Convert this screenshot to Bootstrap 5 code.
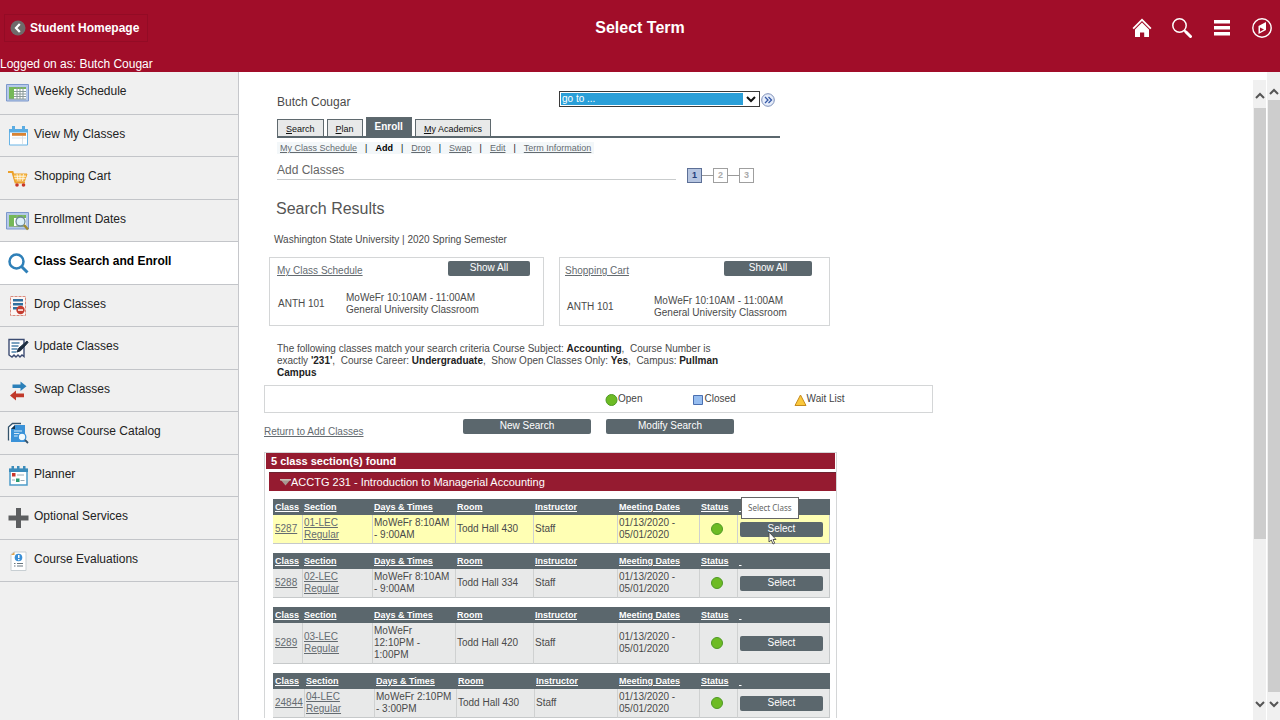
<!DOCTYPE html>
<html lang="en">
<head>
<meta charset="utf-8">
<meta name="viewport" content="width=device-width, initial-scale=1">
<title>Select Term</title>
<link href="https://cdn.jsdelivr.net/npm/bootstrap@5.3.0/dist/css/bootstrap.min.css" rel="stylesheet">
<style>
  body { font-family: "Liberation Sans", Arial, sans-serif; font-size: 10px; line-height: 12px; color: #4a4a4a; background: #fff; }
  a { color: #646b70; }
  svg { display: block; flex: none; }

  /* banner */
  .banner { background: #a10d29; color: #fff; }
  .banner-row { height: 56px; }
  .side-slot { flex: 1 1 0; }
  .back-btn { color: #fff; font-size: 12px; line-height: 16px; font-weight: 700; border: 1px solid #930b25; border-radius: 0; padding: 5px 8px 5px 5px; }
  .back-btn:hover { color: #fff; }
  .page-title { font-size: 16px; line-height: 20px; font-weight: 700; }
  .tools { gap: 20px; }
  .tool-btn { width: 20px; background: none; border: 0; padding: 0; color: #fff; display: flex; justify-content: center; }
  .logged { font-size: 12px; line-height: 16px; }

  /* left menu */
  .side-menu { width: 239px; flex: none; background: #f0f0f0; border-right: 1px solid #c6c7cb; }
  .side-menu .nav-link { height: 43px; padding: 0 6px; gap: 5px; font-size: 12px; line-height: 16px; color: #222; border-bottom: 1px solid #c3c5c9; }
  .side-menu .nav-link:nth-child(even) { height: 42px; }
  .side-menu .nav-link span { padding-bottom: 4px; }
  .side-menu .nav-link.active { background: #fff; color: #000; font-weight: 700; }

  /* page head */
  .work { padding: 19px 0 0 25px; }
  .indent { padding-left: 13px; }
  .head-w { width: 498px; }
  .person { font-size: 12px; line-height: 16px; padding-top: 3px; }
  .goto { width: 201px; }
  .goto select { display: block; width: 100%; height: 16px; appearance: none; border: 1px solid #3a3a3a; border-radius: 0; color: #fff; font-size: 10px; line-height: 12px; padding: 0 2px; outline: 0;
    background: linear-gradient(#2a9fd8, #2a9fd8) 1px 1px / 182px 12px no-repeat #fff; }
  .goto svg { right: 4px; top: 4px; pointer-events: none; }
  .go-btn { border: 0; padding: 0; background: none; margin: 2px 0 0 1px; }
  .tabs { width: 503px; border-bottom: 2px solid #5b676d; margin-top: 7px; gap: 3px; }
  .tabs .nav-link { padding: 3px 8px 1px; font-size: 9px; line-height: 12px; color: #111; background: #e8e9e9; border: 1px solid #5f696e; border-bottom: 0; border-radius: 0; }
  .tabs .nav-link.active { background: #5b676d; color: #fff; font-weight: 700; font-size: 10px; padding: 3px 8px 3px; }
  .subnav { background: #f3f7f9; width: 317px; font-size: 9px; line-height: 12px; gap: 8px; padding: 0 3px; margin-top: 4px; color: #111; white-space: nowrap; }
  .subnav b { color: #000; }
  .add-title { width: 399px; font-size: 12px; line-height: 16px; color: #666; border-bottom: 1px solid #c9cccd; padding-bottom: 1px; }
  .steps { padding: 6px 0 0 11px; }
  .step { width: 15px; height: 15px; border: 1px solid #9f9f9f; font-size: 9px; line-height: 13px; font-weight: 700; color: #aaa; text-align: center; }
  .step.on { border-color: #5c6f96; background: #b6c5e0; color: #24407c; }
  .step-line { width: 11px; height: 1px; background: #9a9a9a; }
  .results-title { font-size: 16px; line-height: 20px; color: #555; margin: 16px 0 0 12px; font-weight: 400; }
  .school { margin: 15px 0 0 10px; }

  /* schedule and cart panels */
  .panels { margin: 11px 0 0 5px; gap: 15px; }
  .panel { border: 1px solid #d4d6d7; height: 69px; }
  .panel-a { width: 275px; padding: 3px 13px 0 7px; }
  .panel-b { width: 271px; padding: 3px 17px 0 5px; }
  .pill { border: 0; border-radius: 2px; background: #5b676d; color: #fff; font-size: 10px; line-height: 12px; padding: 1px 0 2px; text-align: center; }
  .w-show { width: 82px; } .w-show2 { width: 88px; } .w-main { width: 128px; } .w-pick { width: 83px; }
  .meet-a { margin-top: 15px; }
  .meet-b { margin-top: 18px; }
  .course { width: 69px; padding-left: 1px; }
  .course2 { width: 89px; padding-left: 2px; }
  .criteria { width: 450px; margin: 17px 0 0; }
  .criteria b { color: #222; }

  .legend-box { width: 669px; border: 1px solid #d4d6d7; height: 28px; margin-top: 6px; padding-left: 340px; gap: 50px; color: #444; }
  .legend-box span { display: flex; align-items: center; }
  .actions { margin-top: 6px; gap: 15px; }
  .back-link { width: 184px; padding-top: 7px; }

  /* class list */
  .found { width: 573px; margin-top: 14px; border: 1px solid #d4d6d7; border-bottom: 0; padding-left: 1px; }
  .found-bar { background: #951b30; color: #fff; font-size: 11px; line-height: 16px; font-weight: 700; padding-left: 5px; margin: 0 1px 0 0; }
  .group-bar { background: #951b30; color: #fff; font-size: 11px; line-height: 18px; border-top: 1px solid #6d2330; margin: 3px 0 0 3px; padding-left: 11px; }
  .sections { width: 557px; table-layout: fixed; margin: 8px 0 0 7px; border-collapse: separate; border-spacing: 0; }
  .sections + .sections { margin-top: 9px; }
  .sections th { background: #5b676d; font-size: 9px; line-height: 12px; padding: 2px 0 2px 2px; height: 16px; }
  .sections th a { color: #fff; }
  .sections td { background: #e8e9e9; padding: 2px 0 2px 1px; vertical-align: middle; border-left: 1px solid #cfd1d1; border-bottom: 1px solid #c6c9ca; }
  .sections td:first-child { border-left: 0; padding-left: 2px; }
  .sections td:last-child { border-right: 1px solid #c6c9ca; padding-left: 2px; }
  .sections .hot td { background: #ffffb4; }
  .k1 { width: 29px; } .k2 { width: 70px; } .k3 { width: 83px; } .k4 { width: 78px; }
  .k5 { width: 84px; } .k6 { width: 82px; } .k7 { width: 38px; } .k8 { width: 93px; }
  .wide .k1 { width: 31px; } .wide .k3 { width: 82px; } .wide .k5 { width: 83px; }
  .dot { width: 12px; height: 12px; border-radius: 50%; background: #6dbb24; border: 1px solid #4f9a25; display: block; margin-left: 10px; }
  .tip { left: 1px; bottom: 18px; background: #fff; border: 1px solid #666; color: #666; font: 8px/12px "Noto Sans", sans-serif; padding: 4px 6px; white-space: nowrap; }
  .pointer { left: 28px; top: 9px; }

  /* scroll rails */
  .rails { gap: 1px; }
  .rail { width: 13px; background: #f0f0f0; color: #555; padding: 12px 0; }
  .thumb { background: #cdcdcd; width: 12px; }
</style>
</head>
<body class="vh-100 overflow-hidden d-flex flex-column">
<header class="banner">
  <div class="banner-row d-flex align-items-center">
    <div class="side-slot px-1">
      <button class="btn back-btn d-inline-flex align-items-center gap-1" type="button">
        <svg width="16" height="16" viewBox="0 0 16 16"><circle cx="8" cy="8" r="7.5" fill="#6f6a6a"/><path d="M9.8 4 6 8l3.800 4" fill="none" stroke="#fff" stroke-width="2.200"/></svg>
        Student Homepage
      </button>
    </div>
    <h1 class="page-title m-0">Select Term</h1>
    <div class="side-slot tools d-flex justify-content-end align-items-center pe-2">
      <button class="tool-btn" type="button" aria-label="Home"><svg width="20" height="20" viewBox="0 0 20 20" fill="#fff"><path d="M10 .5 19.500 10l-1.300 1.200L10 3 1.800 11.200.5 10z"/><path d="M10 4.500 17 11.500V19h-4.800v-4.500H8V19H3v-7.500z"/></svg></button>
      <button class="tool-btn" type="button" aria-label="Search"><svg width="20" height="20" viewBox="0 0 20 20" fill="none" stroke="#fff"><circle cx="7.500" cy="7.500" r="6.700" stroke-width="1.500"/><path d="m12 12 1.500 1.500" stroke-width="2"/><path d="m14 14 4.500 4.500" stroke-width="3" stroke-linecap="round"/></svg></button>
      <button class="tool-btn" type="button" aria-label="Actions"><svg width="18" height="16" viewBox="0 0 18 16" fill="#fff"><path d="M1 0h16v3.500H1zM1 6h16v3.500H1zM1 12h16v3.500H1z"/></svg></button>
      <button class="tool-btn" type="button" aria-label="Navigator"><svg width="20" height="20" viewBox="0 0 20 20" fill="none" stroke="#fff"><circle cx="10" cy="10" r="9.200" stroke-width="1.400"/><path d="M14 4v8l-7.500 4V8z" fill="#fff" stroke="none"/><path d="M8 9.500v4.300l4-2.200z" fill="#a10d29" stroke="none"/></svg></button>
    </div>
  </div>
  <div class="logged">Logged on as: Butch Cougar</div>
</header>

<div class="d-flex flex-grow-1 overflow-hidden">
  <nav class="side-menu nav flex-column flex-nowrap" aria-label="Enrollment">
    <a class="nav-link d-flex align-items-center" href="#"><svg width="23" height="20" viewBox="0 0 23 20"><path d="M.5 1.500h22v16.500H.5z" fill="#b5c9e9" stroke="#7d98cc"/><path d="M3 4h17v12H3z" fill="#fff"/><path d="M3 4h5v12H3zM8 4h12v2H8z" fill="#75b858"/><path d="M8 8.500h12M8 11h12M8 13.500h12M11 4v12M14 4v12M17 4v12M3 16h17" stroke="#8a9a9a" fill="none"/></svg><span>Weekly Schedule</span></a>
    <a class="nav-link d-flex align-items-center" href="#"><svg width="23" height="22" viewBox="0 0 23 22"><path d="M3.500 4.500h18v15.500h-18z" fill="#fff" stroke="#69b4e6"/><path d="M3 4h19v3.500H3zM6 1h3v4H6zM16 1h3v4h-3z" fill="#5aace2"/><path d="M6 8h14v2.800H6z" fill="#d98332"/><path d="M6 13h14M16.500 11v8" stroke="#dbe3e8"/></svg><span>View My Classes</span></a>
    <a class="nav-link d-flex align-items-center" href="#"><svg width="23" height="22" viewBox="0 0 23 22"><path d="M2 5h4.500l3 10.500H19" fill="none" stroke="#eca02a" stroke-width="2"/><path d="M7 7h14l-2.500 7H9z" fill="#f9c45a" stroke="#eca02a"/><path d="M8 9.300h12M8.500 11.600h11M11 7l1 7M14 7v7M17.500 7l-1 7" stroke="#fff" stroke-width=".7" fill="none"/><circle cx="11" cy="18" r="1.800" fill="#c8372a"/><circle cx="17.500" cy="18" r="1.800" fill="#c8372a"/></svg><span>Shopping Cart</span></a>
    <a class="nav-link d-flex align-items-center" href="#"><svg width="23" height="20" viewBox="0 0 23 20"><path d="M.5 1.500h22v16.500H.5z" fill="#b5c9e9" stroke="#7d98cc"/><path d="M3 4h17v12H3z" fill="#fff"/><path d="M3 4h5v12H3zM8 4h12v3H8z" fill="#75b858"/><path d="M11 4v12M3 15.500h17M17 4v12" stroke="#8fae8a" fill="none"/><circle cx="14.500" cy="10.500" r="4.500" fill="#dceff9" stroke="#6d8996" stroke-width="1.300"/><path d="m18 14 4 4.500" stroke="#a08a31" stroke-width="2.500"/></svg><span>Enrollment Dates</span></a>
    <a class="nav-link active d-flex align-items-center" href="#" aria-current="page"><svg width="23" height="22" viewBox="0 0 23 22" fill="none" stroke="#2f80b8" stroke-width="2.500"><circle cx="10.500" cy="9.500" r="7"/><path d="m15.500 14.500 6 6" stroke-width="3"/></svg><span>Class Search and Enroll</span></a>
    <a class="nav-link d-flex align-items-center" href="#"><svg width="23" height="22" viewBox="0 0 23 22"><path d="M4.500 1.500h15v19h-15z" fill="#fbf6f5" stroke="#d98a7c" stroke-dasharray="3 1"/><path d="M7 4h10v2.500H7zM7 8h10v2.500H7zM7 12h6v2.500H7z" fill="#2f6f9f"/><circle cx="14.500" cy="15" r="4.200" fill="#c43c2f"/><path d="M12 14.300h5v1.500h-5z" fill="#fff"/></svg><span>Drop Classes</span></a>
    <a class="nav-link d-flex align-items-center" href="#"><svg width="23" height="22" viewBox="0 0 23 22"><path d="M3 2.500h15v17l-2-1.500-2 2-2-2-2 2-2-2-2 2-3-2z" fill="#fff" stroke="#3c4c72" stroke-width="1.400"/><path d="M5.500 6h8M5.500 9h7M5.500 12h6M5.500 15h5" stroke="#4e83ab" stroke-width="1.300"/><path d="m21 4-8.500 7.500L11 15l3.500-1.200L22 5.500z" fill="#1c2d40" stroke="#1c2d40"/></svg><span>Update Classes</span></a>
    <a class="nav-link d-flex align-items-center" href="#"><svg width="23" height="22" viewBox="0 0 23 22"><path d="M6.500 4.500h8V1.500l6 4.700-6 4.700V8h-8z" fill="#2b80b9"/><path d="M18 13.500h-8v-3l-6 5 6 5v-3.300h8z" fill="#c1392b"/></svg><span>Swap Classes</span></a>
    <a class="nav-link d-flex align-items-center" href="#"><svg width="23" height="22" viewBox="0 0 23 22"><path d="M2.500 18.500V5l4-3.500H15" fill="#fff" stroke="#34536b" stroke-width="1.300"/><path d="M9 3h10v17H5V7z" fill="#3a92d8"/><path d="M9 3v4H5z" fill="#17324a"/><path d="M8 9h8M8 11.500h6M8 14h4" stroke="#d4ebfa"/><circle cx="16" cy="15" r="3.800" fill="#f2f9fd" stroke="#3a92d8" stroke-width="1.300"/><path d="m19 18 3 3" stroke="#34536b" stroke-width="1.800"/></svg><span>Browse Course Catalog</span></a>
    <a class="nav-link d-flex align-items-center" href="#"><svg width="23" height="22" viewBox="0 0 23 22"><path d="M4 4.500h17V20H4z" fill="#fff" stroke="#4d9cc9" stroke-width="1.500"/><path d="M3 3.500h19V7H3zM5.500 1h2.500v4H5.500zM11 1h2.500v4H11zM17 1h2.500v4H17z" fill="#3b8cbb"/><path d="M6 8h3.500v3.500H6z" fill="#c9362c"/><path d="M10 13.500h3.500V17H10z" fill="#2b9a70"/><path d="M11 10h7M6 15h3M14.500 15.500h4" stroke="#9aabb5"/></svg><span>Planner</span></a>
    <a class="nav-link d-flex align-items-center" href="#"><svg width="23" height="22" viewBox="0 0 23 22" fill="#5c5e60"><path d="M10 1h5v7.500h7.500v5H15V21h-5v-7.500H2.500v-5H10z"/></svg><span>Optional Services</span></a>
    <a class="nav-link d-flex align-items-center" href="#"><svg width="23" height="22" viewBox="0 0 23 22"><path d="M5 4.500 8 2h12v18.500H5z" fill="#fff" stroke="#c8cfd3"/><path d="M5 5 8.500 2v3z" fill="#e0a34d"/><circle cx="12.500" cy="7.500" r="3.800" fill="#3a8fd6"/><path d="M12 5h1.500v3H12zM12 9h1.500v1.200H12z" fill="#fff"/><path d="M8 13.500h1.500M8 16h1.500M11 13.500h6M11 16h6" stroke="#687780" stroke-width="1.200"/></svg><span>Course Evaluations</span></a>
  </nav>

  <main class="work flex-grow-1 overflow-hidden">
    <div class="indent">
      <div class="head-w d-flex align-items-start justify-content-between">
        <div class="person">Butch Cougar</div>
        <div class="d-flex align-items-start">
          <div class="goto position-relative">
            <select aria-label="Go to"><option>go to ...</option></select>
            <svg class="position-absolute" width="10" height="8" viewBox="0 0 10 8"><path d="m1 2 4 4 4-4" fill="none" stroke="#111" stroke-width="2"/></svg>
          </div>
          <button class="go-btn" type="button" aria-label="Go"><svg width="14" height="14" viewBox="0 0 14 14" fill="none"><circle cx="7" cy="7" r="6.300" fill="#e6edfa" stroke="#7d8fb8"/><path d="m4 4 3 3-3 3M7.500 4l3 3-3 3" stroke="#3558a6" stroke-width="1.300"/></svg></button>
        </div>
      </div>
      <nav class="tabs nav flex-nowrap align-items-end" aria-label="Sections">
        <a class="nav-link" href="#"><u>S</u>earch</a>
        <a class="nav-link" href="#"><u>P</u>lan</a>
        <a class="nav-link active" href="#" aria-current="page">Enroll</a>
        <a class="nav-link" href="#"><u>M</u>y Academics</a>
      </nav>
      <div class="subnav d-flex">
        <a href="#">My Class Schedule</a><span>|</span><b>Add</b><span>|</span><a href="#">Drop</a><span>|</span><a href="#">Swap</a><span>|</span><a href="#">Edit</a><span>|</span><a href="#">Term Information</a>
      </div>
      <div class="d-flex align-items-start mt-2">
        <div class="add-title">Add Classes</div>
        <div class="steps d-flex align-items-center">
          <div class="step on">1</div><div class="step-line"></div><div class="step">2</div><div class="step-line"></div><div class="step">3</div>
        </div>
      </div>
    </div>

    <h2 class="results-title">Search Results</h2>
    <div class="school">Washington State University | 2020 Spring Semester</div>

    <div class="panels d-flex">
      <section class="panel panel-a">
        <div class="d-flex justify-content-between align-items-start">
          <a class="pt-1" href="#">My Class Schedule</a>
          <button class="pill w-show" type="button">Show All</button>
        </div>
        <div class="meet-a d-flex align-items-center">
          <div class="course">ANTH 101</div>
          <div>MoWeFr 10:10AM - 11:00AM<br>General University Classroom</div>
        </div>
      </section>
      <section class="panel panel-b">
        <div class="d-flex justify-content-between align-items-start">
          <a class="pt-1" href="#">Shopping Cart</a>
          <button class="pill w-show2" type="button">Show All</button>
        </div>
        <div class="meet-b d-flex align-items-center">
          <div class="course2">ANTH 101</div>
          <div>MoWeFr 10:10AM - 11:00AM<br>General University Classroom</div>
        </div>
      </section>
    </div>

    <div class="indent">
      <p class="criteria">The following classes match your search criteria Course Subject: <b>Accounting</b>,&nbsp; Course Number is<br>exactly <b>'231'</b>,&nbsp; Course Career: <b>Undergraduate</b>,&nbsp; Show Open Classes Only: <b>Yes</b>,&nbsp; Campus: <b>Pullman<br>Campus</b></p>
    </div>

    <div class="legend-box d-flex align-items-center">
      <span><svg width="13" height="13" viewBox="0 0 13 13"><circle cx="6.500" cy="7" r="5.500" fill="#6dbb24" stroke="#4f9a25"/></svg>Open</span>
      <span><svg width="12" height="12" viewBox="0 0 12 12"><path d="M1.500 2.500h9v9h-9z" fill="#96bdf0" stroke="#4a6fb0"/></svg>Closed</span>
      <span class="ms-2"><svg width="13" height="13" viewBox="0 0 13 13"><path d="M6.500 2 12 12.500H1z" fill="#fac83c" stroke="#c58a1c"/></svg>Wait List</span>
    </div>

    <div class="actions d-flex align-items-start">
      <div class="back-link"><a href="#">Return to Add Classes</a></div>
      <button class="pill w-main" type="button">New Search</button>
      <button class="pill w-main" type="button">Modify Search</button>
    </div>

    <section class="found">
      <div class="found-bar">5 class section(s) found</div>
      <div class="group-bar d-flex align-items-center"><svg width="11" height="8" viewBox="0 0 11 8"><path d="M0 1h11L5.500 7.500z" fill="#a79a92"/><path d="M0 1h11v1.500H0z" fill="#cbbfb7"/></svg>ACCTG 231 - Introduction to Managerial Accounting</div>

      <table class="sections">
        <colgroup><col class="k1"><col class="k2"><col class="k3"><col class="k4"><col class="k5"><col class="k6"><col class="k7"><col class="k8"></colgroup>
        <thead><tr><th><a href="#">Class</a></th><th><a href="#">Section</a></th><th><a href="#">Days &amp; Times</a></th><th><a href="#">Room</a></th><th><a href="#">Instructor</a></th><th><a href="#">Meeting Dates</a></th><th><a href="#">Status</a></th><th><a href="#">&nbsp;</a></th></tr></thead>
        <tbody><tr class="hot"><td><a href="#">5287</a></td><td><a href="#">01-LEC<br>Regular</a></td><td>MoWeFr 8:10AM - 9:00AM</td><td>Todd Hall 430</td><td>Staff</td><td>01/13/2020 -<br>05/01/2020</td><td><i class="dot"></i></td>
          <td><div class="position-relative"><button class="pill w-pick d-block" type="button">Select</button>
            <div class="tip position-absolute" role="tooltip">Select Class</div>
            <svg class="pointer position-absolute" width="9" height="14" viewBox="0 0 9 14"><path d="M1 1v10l2.300-2 1.700 4 1.700-.8L5 8.500h3z" fill="#fff" stroke="#444" stroke-width=".9"/></svg></div></td></tr></tbody>
      </table>

      <table class="sections">
        <colgroup><col class="k1"><col class="k2"><col class="k3"><col class="k4"><col class="k5"><col class="k6"><col class="k7"><col class="k8"></colgroup>
        <thead><tr><th><a href="#">Class</a></th><th><a href="#">Section</a></th><th><a href="#">Days &amp; Times</a></th><th><a href="#">Room</a></th><th><a href="#">Instructor</a></th><th><a href="#">Meeting Dates</a></th><th><a href="#">Status</a></th><th><a href="#">&nbsp;</a></th></tr></thead>
        <tbody><tr><td><a href="#">5288</a></td><td><a href="#">02-LEC<br>Regular</a></td><td>MoWeFr 8:10AM - 9:00AM</td><td>Todd Hall 334</td><td>Staff</td><td>01/13/2020 -<br>05/01/2020</td><td><i class="dot"></i></td><td><button class="pill w-pick d-block" type="button">Select</button></td></tr></tbody>
      </table>

      <table class="sections">
        <colgroup><col class="k1"><col class="k2"><col class="k3"><col class="k4"><col class="k5"><col class="k6"><col class="k7"><col class="k8"></colgroup>
        <thead><tr><th><a href="#">Class</a></th><th><a href="#">Section</a></th><th><a href="#">Days &amp; Times</a></th><th><a href="#">Room</a></th><th><a href="#">Instructor</a></th><th><a href="#">Meeting Dates</a></th><th><a href="#">Status</a></th><th><a href="#">&nbsp;</a></th></tr></thead>
        <tbody><tr><td><a href="#">5289</a></td><td><a href="#">03-LEC<br>Regular</a></td><td>MoWeFr<br>12:10PM -<br>1:00PM</td><td>Todd Hall 420</td><td>Staff</td><td>01/13/2020 -<br>05/01/2020</td><td><i class="dot"></i></td><td><button class="pill w-pick d-block" type="button">Select</button></td></tr></tbody>
      </table>

      <table class="sections wide">
        <colgroup><col class="k1"><col class="k2"><col class="k3"><col class="k4"><col class="k5"><col class="k6"><col class="k7"><col class="k8"></colgroup>
        <thead><tr><th><a href="#">Class</a></th><th><a href="#">Section</a></th><th><a href="#">Days &amp; Times</a></th><th><a href="#">Room</a></th><th><a href="#">Instructor</a></th><th><a href="#">Meeting Dates</a></th><th><a href="#">Status</a></th><th><a href="#">&nbsp;</a></th></tr></thead>
        <tbody><tr><td><a href="#">24844</a></td><td><a href="#">04-LEC<br>Regular</a></td><td>MoWeFr 2:10PM - 3:00PM</td><td>Todd Hall 430</td><td>Staff</td><td>01/13/2020 -<br>05/01/2020</td><td><i class="dot"></i></td><td><button class="pill w-pick d-block" type="button">Select</button></td></tr></tbody>
      </table>
    </section>
  </main>

  <div class="rails d-flex flex-shrink-0" aria-hidden="true">
    <div class="rail d-flex flex-column align-items-center mt-2">
      <svg width="10" height="8" viewBox="0 0 10 8"><path d="m1 6 4-4 4 4" fill="none" stroke="currentColor" stroke-width="2"/></svg>
      <div class="thumb mt-2" style="height:70%"></div>
      <svg class="mt-auto" width="10" height="8" viewBox="0 0 10 8"><path d="m1 2 4 4 4-4" fill="none" stroke="currentColor" stroke-width="2"/></svg>
    </div>
    <div class="rail d-flex flex-column align-items-center">
      <svg class="mt-1" width="10" height="8" viewBox="0 0 10 8"><path d="m1 6 4-4 4 4" fill="none" stroke="currentColor" stroke-width="2"/></svg>
      <div class="thumb flex-grow-1 mt-1 mb-2"></div>
      <svg width="10" height="8" viewBox="0 0 10 8"><path d="m1 2 4 4 4-4" fill="none" stroke="currentColor" stroke-width="2"/></svg>
    </div>
  </div>
</div>
<script src="https://cdn.jsdelivr.net/npm/bootstrap@5.3.0/dist/js/bootstrap.bundle.min.js"></script>
</body>
</html>
